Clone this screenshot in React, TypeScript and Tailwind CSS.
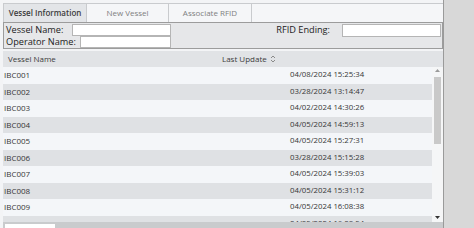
const rows = [
  ["IBC001", "04/08/2024 15:25:34"],
  ["IBC002", "03/28/2024 13:14:47"],
  ["IBC003", "04/02/2024 14:30:26"],
  ["IBC004", "04/05/2024 14:59:13"],
  ["IBC005", "04/05/2024 15:27:31"],
  ["IBC006", "03/28/2024 15:15:28"],
  ["IBC007", "04/05/2024 15:39:03"],
  ["IBC008", "04/05/2024 15:31:12"],
  ["IBC009", "04/05/2024 16:08:38"],
  ["IBC010", "04/05/2024 16:08:54"],
];

export default function App() {
  return (
    <div
      className="flex h-[228px] w-[474px] overflow-hidden bg-[#d8d8d8] text-[#363636]"
      style={{ fontFamily: '"Open Sans", "Noto Sans", sans-serif' }}
    >
      <div className="flex h-full w-[444px] flex-col border-r border-[#9a9a9a] bg-[#f3f4f6] pl-[3px] pt-[3px]">
        {/* tabs */}
        <div className="flex h-[19px] border-t border-l border-[#c9cbce] bg-[#f5f6f8] text-[8px]">
          <div className="flex w-[83px] items-center justify-center border-r border-[#c9cbce] bg-[#e3e5e8] font-semibold text-[#3c3c3c]">
            Vessel Information
          </div>
          <div className="flex w-[82px] items-center justify-center border-r border-[#c9cbce] text-[#808080]">
            New Vessel
          </div>
          <div className="flex w-[83px] items-center justify-center border-r border-[#c9cbce] text-[#808080]">
            Associate RFID
          </div>
          <div className="flex-1" />
        </div>

        {/* form */}
        <div className="flex h-[27px] border border-[#9c9c9c] bg-[#e6e7e9] text-[9.2px] leading-[12px] text-[#222]">
          <div className="flex w-[168px] flex-col whitespace-nowrap pl-[2px] pt-[1px]">
            <div className="flex items-center">
              <span className="w-[66px] shrink-0">Vessel Name:</span>
              <div className="h-[12px] w-[99px] shrink-0 border border-[#b5b5b5] bg-white" />
            </div>
            <div className="flex items-center">
              <span className="w-[74px] shrink-0">Operator Name:</span>
              <div className="h-[12px] w-[91px] shrink-0 border border-[#b5b5b5] bg-white" />
            </div>
          </div>
          <div className="flex flex-1 items-start justify-end whitespace-nowrap pt-[1px] pr-[1px]">
            <span className="mr-[12px]">RFID Ending:</span>
            <div className="h-[13px] w-[99px] shrink-0 border border-[#b5b5b5] bg-white" />
          </div>
        </div>

        {/* table */}
        <div className="mt-[2px] flex flex-1 flex-col overflow-hidden text-[8px]">
          <div className="flex h-[16px] items-center bg-[#e1e3e6] pr-[11px] font-medium text-[#3c3c3c]">
            <span className="w-[219px] pl-[5px]">Vessel Name</span>
            <span className="flex items-center gap-[3px]">
              Last Update
              <svg width="6" height="8" viewBox="0 0 6 8" fill="none" stroke="#8a8a8a" strokeWidth="1">
                <path d="M1 3 L3 1 L5 3" />
                <path d="M1 5 L3 7 L5 5" />
              </svg>
            </span>
          </div>
          <div className="flex flex-1 overflow-hidden">
            <div className="flex-1 overflow-hidden">
              {rows.map(([name, date], i) => (
                <div
                  key={name}
                  className={`flex h-[16.5px] items-center ${i % 2 === 0 ? "bg-[#f4f6f9]" : "bg-[#dfe1e4]"}`}
                >
                  <span className="w-[287px] pl-[1px]">{name}</span>
                  <span className="text-[7.8px]">{date}</span>
                </div>
              ))}
            </div>
            <div className="flex w-[11px] flex-col items-center bg-[#f5f6f7] pt-[2px] pb-[2px]">
              <svg width="5" height="4" viewBox="0 0 5 4" className="mb-[4px]">
                <path d="M0 3 L2.5 0 L5 3 Z" fill="#9a9a9a" />
              </svg>
              <div className="h-[67px] w-[7px] bg-[#c9c9c9]" />
              <div className="flex-1" />
              <svg width="5" height="4" viewBox="0 0 5 4">
                <path d="M0 0 L2.5 3 L5 0 Z" fill="#333" />
              </svg>
            </div>
          </div>
        </div>

        {/* footer */}
        <div className="flex h-[6px] items-end bg-[#c9cbcd] pl-[2px]">
          <div className="h-[4px] w-[50px] bg-white" />
        </div>
      </div>
    </div>
  );
}
